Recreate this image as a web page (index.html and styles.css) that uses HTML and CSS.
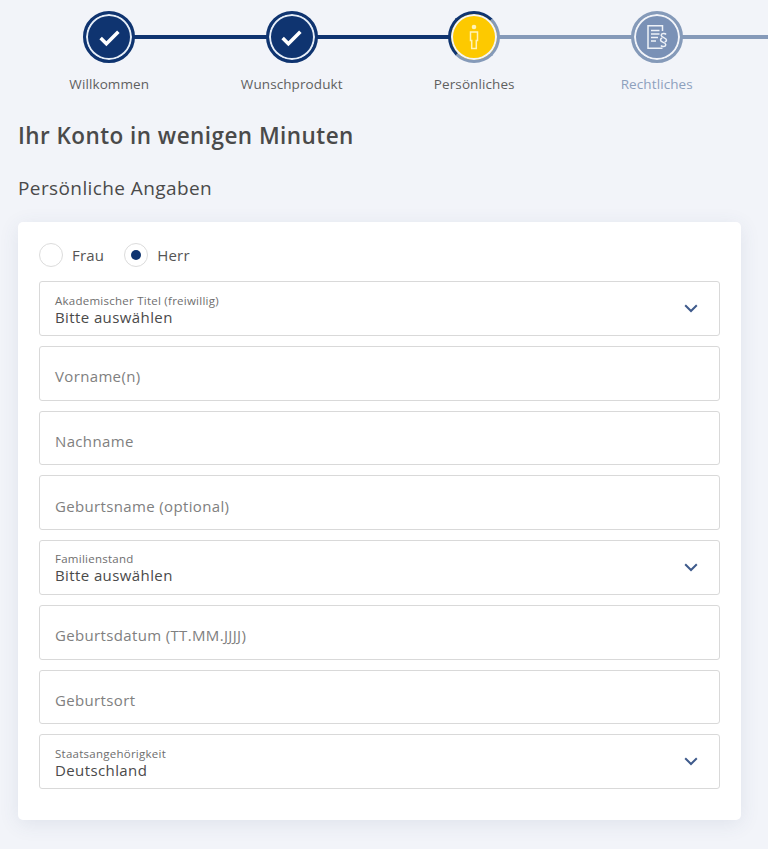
FILE: index.html
```html
<!DOCTYPE html>
<html lang="de">
<head>
    <meta charset="UTF-8">
    <meta name="viewport" content="width=device-width, initial-scale=1.0">
    <title>Ihr Konto in wenigen Minuten</title>
    <link rel="stylesheet" href="styles.css">
</head>
<body>
    <div class="stepper">
        <div class="step done">
            <div class="step-circle">
                <svg viewBox="0 0 24 24" width="25" height="25"><path d="M3.500 12.500l5.500 5.500L20.500 6.500" fill="none" stroke="#fff" stroke-width="3.400"/></svg>
            </div>
            <div class="step-label">Willkommen</div>
        </div>
        <div class="step done">
            <div class="step-circle">
                <svg viewBox="0 0 24 24" width="25" height="25"><path d="M3.500 12.500l5.500 5.500L20.500 6.500" fill="none" stroke="#fff" stroke-width="3.400"/></svg>
            </div>
            <div class="step-label">Wunschprodukt</div>
        </div>
        <div class="step current">
            <div class="step-circle">
                <svg viewBox="0 0 12 26" width="12" height="26" fill="none" stroke="#fff3b8" stroke-width="1.500">
                    <circle cx="6" cy="3" r="2.300" fill="#fff3b8" stroke="none"/>
                    <path d="M2.500 8h7v8.500H8.300V24.500H3.700V16.500H2.500z"/>
                </svg>
            </div>
            <div class="step-label">Persönliches</div>
        </div>
        <div class="step todo">
            <div class="step-circle">
                <svg viewBox="0 0 24 26" width="24" height="26" fill="none" stroke="#eef2f8" stroke-width="1.500">
                    <path d="M17.500 7V1.700H3v22.600h14.500"/>
                    <path d="M6 6.500h8.500M6 10h8.500M6 13.500h7M6 17h5"/>
                    <path d="M21 10.500c-1-1.700-4.800-1.300-4.800 .8 0 2.400 5.300 2.200 5.300 4.700 0 1-.8 1.700-1.800 2M17.200 14c-1 .3-1.700 1-1.700 2 0 2.500 5.300 2.300 5.300 4.700 0 2.100-3.800 2.500-4.800 .8"/>
                </svg>
            </div>
            <div class="step-label">Rechtliches</div>
        </div>
    </div>

    <h1>Ihr Konto in wenigen Minuten</h1>
    <h2>Persönliche Angaben</h2>

    <form class="card">
        <div class="gender">
            <div class="radio-item">
                <span class="radio"></span>
                <span>Frau</span>
            </div>
            <div class="radio-item">
                <span class="radio checked"></span>
                <span>Herr</span>
            </div>
        </div>

        <div class="fields">
            <div class="field select">
                <div class="select-text">
                    <div class="small-label">Akademischer Titel (freiwillig)</div>
                    <div class="value">Bitte auswählen</div>
                </div>
                <svg class="chevron" viewBox="0 0 14 9" width="14" height="9"><path d="M1.200 1.300L7 7l5.800-5.700" fill="none" stroke="#3f5b8c" stroke-width="2"/></svg>
            </div>
            <div class="field placeholder">Vorname(n)</div>
            <div class="field placeholder">Nachname</div>
            <div class="field placeholder">Geburtsname (optional)</div>
            <div class="field select">
                <div class="select-text">
                    <div class="small-label">Familienstand</div>
                    <div class="value">Bitte auswählen</div>
                </div>
                <svg class="chevron" viewBox="0 0 14 9" width="14" height="9"><path d="M1.200 1.300L7 7l5.800-5.700" fill="none" stroke="#3f5b8c" stroke-width="2"/></svg>
            </div>
            <div class="field placeholder">Geburtsdatum (TT.MM.JJJJ)</div>
            <div class="field placeholder">Geburtsort</div>
            <div class="field select">
                <div class="select-text">
                    <div class="small-label">Staatsangehörigkeit</div>
                    <div class="value">Deutschland</div>
                </div>
                <svg class="chevron" viewBox="0 0 14 9" width="14" height="9"><path d="M1.200 1.300L7 7l5.800-5.700" fill="none" stroke="#3f5b8c" stroke-width="2"/></svg>
            </div>
        </div>
    </form>
</body>
</html>
```

FILE: styles.css
```css
html, body {
    height: 100%;
}
body {
    margin: 0;
    overflow: hidden;
    background-color: #f2f4f9;
    color: #4a4a4a;
    font-family: "Open Sans", "Noto Sans", Arial, sans-serif;
}

/* stepper */
.stepper {
    display: grid;
    grid-template-columns: repeat(4, 182.5px);
    padding: 11px 0 0 18px;
}
.step {
    position: relative;
    display: flex;
    flex-direction: column;
    align-items: center;
}
.step::after {
    content: "";
    position: absolute;
    top: 24px;
    left: 50%;
    width: 100%;
    height: 4px;
    background-color: #0f3470;
}
.step:last-child::after {
    width: 111px;
}
.step.current::after,
.step.todo::after {
    background-color: #859ab9;
}
.step-circle {
    position: relative;
    z-index: 1;
    box-sizing: border-box;
    width: 52px;
    height: 52px;
    display: flex;
    align-items: center;
    justify-content: center;
    border-radius: 50%;
    border: 3px solid #0f3470;
    background-color: #0f3470;
    box-shadow: inset 0 0 0 2px #f2f4f9;
}
.done .step-circle {
    box-shadow: inset 0 0 0 2px #e6eef8;
}
.current .step-circle {
    border-color: #859ab9;
    border-top-color: #0f3470;
    border-left-color: #0f3470;
    background-color: #fdc900;
}
.todo .step-circle {
    border-color: #859ab9;
    background-color: #7a91b6;
}
.step-label {
    margin-top: 12px;
    font-size: 13.500px;
    line-height: 18px;
    letter-spacing: 0.1px;
    color: #5f5f5f;
}
.todo .step-label {
    color: #8da0bd;
}

/* headings */
h1 {
    margin: 28px 0 0 18px;
    font-size: 22.500px;
    line-height: 30px;
    font-weight: 600;
    letter-spacing: 0.45px;
    color: #4a4a4a;
}
h2 {
    margin: 24px 0 0 18px;
    font-size: 19px;
    line-height: 26px;
    font-weight: 400;
    letter-spacing: 0.4px;
    color: #4a4a4a;
}

/* card */
.card {
    box-sizing: border-box;
    width: 723px;
    height: 598px;
    margin: 21px 0 0 18px;
    padding: 21px 21px 0;
    background-color: #fff;
    border-radius: 5px;
    box-shadow: 0 4px 20px rgba(60, 80, 120, 0.1);
}
.gender {
    display: flex;
    gap: 20px;
    height: 24px;
    margin-bottom: 14.400px;
}
.radio-item {
    display: flex;
    align-items: center;
    gap: 9px;
    font-size: 15px;
    letter-spacing: 0.2px;
    color: #555;
}
.radio {
    box-sizing: border-box;
    width: 24px;
    height: 24px;
    display: flex;
    align-items: center;
    justify-content: center;
    border: 1px solid #dcdcdc;
    border-radius: 50%;
    background-color: #fff;
}
.radio.checked::before {
    content: "";
    width: 10px;
    height: 10px;
    border-radius: 50%;
    background-color: #0f3470;
}
.fields {
    display: flex;
    flex-direction: column;
    gap: 10px;
}
.field {
    box-sizing: border-box;
    height: 54.700px;
    display: flex;
    align-items: center;
    padding: 0 15px;
    border: 1px solid #d9d9d9;
    border-radius: 3px;
    background-color: #fff;
}
.placeholder {
    padding-top: 6px;
    font-size: 15px;
    letter-spacing: 0.35px;
    color: #808080;
}
.select {
    justify-content: space-between;
    padding-right: 21px;
}
.select-text {
    padding-top: 2px;
}
.small-label {
    font-size: 11.500px;
    line-height: 14px;
    letter-spacing: 0.25px;
    color: #6e6e6e;
}
.value {
    font-size: 15px;
    line-height: 18px;
    letter-spacing: 0.4px;
    color: #4a4a4a;
}
```
